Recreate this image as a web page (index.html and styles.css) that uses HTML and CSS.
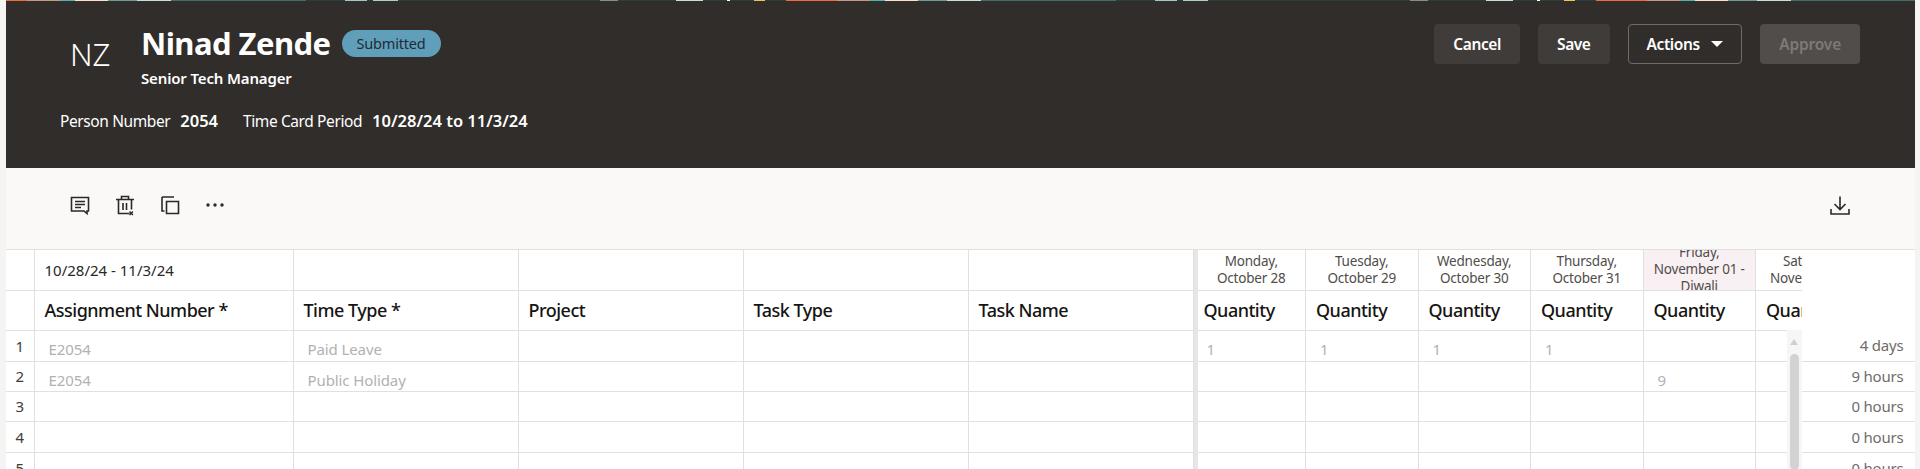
FILE: index.html

```html
<!DOCTYPE html>
<html lang="en">
<head>
  <meta charset="UTF-8">
  <title>Time Card</title>
  <link rel="stylesheet" href="styles.css">
</head>
<body>
  <div class="page">
    <header class="hero">
      <div class="hero-top">
        <div class="avatar">NZ</div>
        <div class="who">
          <div class="name-row">
            <h1>Ninad Zende</h1>
            <span class="badge">Submitted</span>
          </div>
          <div class="job">Senior Tech Manager</div>
        </div>
        <div class="actions">
          <button class="btn">Cancel</button>
          <button class="btn">Save</button>
          <button class="btn btn-outline">Actions <span class="caret"></span></button>
          <button class="btn btn-off">Approve</button>
        </div>
      </div>
      <div class="meta">
        <span class="meta-label">Person Number</span>
        <span class="meta-value">2054</span>
        <span class="meta-label meta-second">Time Card Period</span>
        <span class="meta-value">10/28/24 to 11/3/24</span>
      </div>
    </header>

    <div class="toolbar">
      <div class="tools">
        <svg viewBox="0 0 24 24"><path d="M3.5 4.5h17v13.5h-1.5v2.5l-3-2.5h-12.5z M7 8.5h10 M7 11.5h10 M7 14.5h6"/></svg>
        <svg viewBox="0 0 24 24"><path d="M3 6.5h18 M8.5 6.5v-3h7v3 M5.5 6.5v14h11 M18.5 6.5v10 M10 10v7 M13.5 10v7"/><path class="fill" d="M17 18l1.2 1.2 1.2-1.2 1 1-1.2 1.2 1.2 1.2-1 1-1.2-1.2-1.2 1.2-1-1 1.2-1.2-1.2-1.2z"/></svg>
        <svg viewBox="0 0 24 24"><path d="M8 4h8 M4 4v14h2.5 M4 4h4 M8.5 8.5h12v12h-12z"/></svg>
        <svg viewBox="0 0 24 24"><circle class="fill" cx="5" cy="12" r="1.7"/><circle class="fill" cx="12" cy="12" r="1.7"/><circle class="fill" cx="19" cy="12" r="1.7"/></svg>
      </div>
      <svg class="download" viewBox="0 0 24 24"><path d="M12 3.5v13 M6.5 11l5.5 5.5 5.5-5.5 M3 16v5h18v-5"/></svg>
    </div>

    <div class="sheet">
      <table class="grid frozen">
        <colgroup>
          <col class="c-num"><col class="c-assign"><col class="c-type"><col class="c-task"><col class="c-task"><col class="c-task">
        </colgroup>
        <tr class="r-date">
          <td></td><td class="range">10/28/24 - 11/3/24</td><td></td><td></td><td></td><td></td>
        </tr>
        <tr class="r-head">
          <td></td><th>Assignment Number *</th><th>Time Type *</th><th>Project</th><th>Task Type</th><th>Task Name</th>
        </tr>
        <tr class="r1"><td class="num">1</td><td class="val">E2054</td><td class="val">Paid Leave</td><td></td><td></td><td></td></tr>
        <tr class="r2"><td class="num">2</td><td class="val">E2054</td><td class="val">Public Holiday</td><td></td><td></td><td></td></tr>
        <tr class="r3"><td class="num">3</td><td></td><td></td><td></td><td></td><td></td></tr>
        <tr class="r4"><td class="num">4</td><td></td><td></td><td></td><td></td><td></td></tr>
        <tr class="r5"><td class="num">5</td><td></td><td></td><td></td><td></td><td></td></tr>
      </table>

      <div class="days">
        <table class="grid day-grid">
          <colgroup>
            <col class="c-first"><col class="c-day"><col class="c-day"><col class="c-day"><col class="c-day"><col class="c-day">
          </colgroup>
          <tr class="r-date">
            <td><div class="day">Monday,<br>October 28</div></td>
            <td><div class="day">Tuesday,<br>October 29</div></td>
            <td><div class="day">Wednesday,<br>October 30</div></td>
            <td><div class="day">Thursday,<br>October 31</div></td>
            <td class="holiday"><div class="day">Friday,<br>November 01 -<br>Diwali</div></td>
            <td><div class="day">Saturday,<br>November 02</div></td>
          </tr>
          <tr class="r-head"><th>Quantity</th><th>Quantity</th><th>Quantity</th><th>Quantity</th><th>Quantity</th><th>Quantity</th></tr>
          <tr class="r1"><td class="val">1</td><td class="val">1</td><td class="val">1</td><td class="val">1</td><td></td><td></td></tr>
          <tr class="r2"><td></td><td></td><td></td><td></td><td class="val">9</td><td></td></tr>
          <tr class="r3"><td></td><td></td><td></td><td></td><td></td><td></td></tr>
          <tr class="r4"><td></td><td></td><td></td><td></td><td></td><td></td></tr>
          <tr class="r5"><td></td><td></td><td></td><td></td><td></td><td></td></tr>
        </table>
        <div class="scrollbar">
          <span class="scroll-up"></span>
          <span class="scroll-thumb"></span>
        </div>
      </div>

      <table class="grid totals">
        <tr class="r-date blank"><td></td></tr>
        <tr class="r-head blank"><td></td></tr>
        <tr class="r1"><td class="sum">4 days</td></tr>
        <tr class="r2"><td class="sum">9 hours</td></tr>
        <tr class="r3"><td class="sum">0 hours</td></tr>
        <tr class="r4"><td class="sum">0 hours</td></tr>
        <tr class="r5"><td class="sum">0 hours</td></tr>
      </table>
    </div>
  </div>
</body>
</html>
```

FILE: styles.css

```css
* {
  box-sizing: border-box;
}

html, body {
  height: 100%;
  margin: 0;
  overflow: hidden;
}

body {
  background: #f5f4f2;
  font-family: "Noto Sans", Arial, sans-serif;
  color: #161513;
}

.page {
  margin: 0 5px 0 6px;
  height: 469px;
  overflow: hidden;
  background: #fff;
}

/* dark banner */
.hero {
  height: 168px;
  background-color: #312d2a;
  color: #fff;
  padding: 24px 55px 0 54px;
  position: relative;
}

.hero::before {
  content: "";
  position: absolute;
  left: 0;
  right: 0;
  top: 0;
  height: 1px;
  background-image: linear-gradient(90deg,
    #f26b3a 0 51px, #c49a80 51px 84px, #4fb3ae 84px 99px, #fde0cc 99px 132px,
    #6d9b98 132px 161px, #c5e0dc 161px 195px, #3f6f6b 195px 330px, #21413f 330px 369px,
    #9fc9c4 369px 391px, #21413f 391px 397px, #a9d0cb 397px 422px, #27403e 422px 624px,
    #87907a 624px 642px, #27403e 642px 700px, #c5e0dc 700px 727px, #21413f 727px 751px,
    #fff 751px 754px, #27403e 754px 778px, #f0c24f 778px 789px, #27403e 789px 810px);
  background-size: 810px 1px;
  background-position: -30px 0;
}

.hero-top {
  display: flex;
  align-items: flex-start;
}

.avatar {
  width: 74px;
  margin-top: 12px;
  padding-left: 10px;
  text-align: left;
  font-size: 31px;
  line-height: 36px;
  font-weight: 300;
}

.who {
  margin-left: 7px;
}

.name-row {
  display: flex;
  align-items: flex-start;
  gap: 11px;
}

h1 {
  margin: 0;
  font-size: 31px;
  line-height: 38px;
  font-weight: 700;
  letter-spacing: -0.55px;
}

.badge {
  margin-top: 6px;
  width: 99px;
  height: 27px;
  border-radius: 14px;
  background: #5f9fba;
  color: #1f2b33;
  font-size: 14.5px;
  line-height: 27px;
  text-align: center;
  letter-spacing: -0.2px;
}

.job {
  margin-top: 6px;
  font-size: 15px;
  line-height: 20px;
  font-weight: 600;
  letter-spacing: -0.15px;
}

.actions {
  margin-left: auto;
  display: flex;
  gap: 18px;
}

.btn {
  height: 40px;
  padding: 0 18px;
  border: 1px solid transparent;
  border-radius: 4px;
  background: #403c39;
  color: #fff;
  font-family: inherit;
  font-size: 15.5px;
  font-weight: 600;
  letter-spacing: -0.4px;
}

.btn-outline {
  background: transparent;
  border-color: #6f6b68;
}

.btn-off {
  background: #514d4a;
  color: #7d7a77;
  letter-spacing: -0.2px;
}

.caret {
  display: inline-block;
  margin-left: 8px;
  vertical-align: 3px;
  border-left: 6px solid transparent;
  border-right: 6px solid transparent;
  border-top: 6px solid #fff;
}

.meta {
  display: flex;
  align-items: center;
  margin-top: 23px;
  font-size: 15.5px;
  line-height: 20px;
  letter-spacing: -0.4px;
}

.meta-value {
  margin-left: 10px;
  font-weight: 600;
  font-size: 16.5px;
  letter-spacing: 0;
}

.meta-second {
  margin-left: 25px;
}

/* toolbar */
.toolbar {
  height: 81px;
  background: #faf9f7;
  display: flex;
  align-items: center;
  justify-content: space-between;
  padding: 0 63px 8px 62px;
}

.tools {
  display: flex;
  gap: 21px;
}

.toolbar svg {
  width: 24px;
  height: 24px;
  fill: none;
  stroke: #2b2826;
  stroke-width: 1.6;
}

.toolbar svg .fill {
  fill: #2b2826;
  stroke: none;
}

/* spreadsheet */
.sheet {
  display: flex;
  border-top: 1px solid #e0e0e0;
}

.grid {
  border-collapse: collapse;
  table-layout: fixed;
}

.grid td, .grid th {
  padding: 0;
  border-right: 1px solid #e0e0e0;
  border-bottom: 1px solid #e0e0e0;
  overflow: hidden;
  white-space: nowrap;
}

.frozen {
  width: 1187px;
  flex: none;
}

.c-num { width: 28px; }
.c-assign { width: 259px; }
.c-type { width: 225px; }
.c-task { width: 225px; }
.c-first { width: 108px; }
.c-day { width: 112.5px; }

.r-date { height: 40px; }
.r-head { height: 40px; }
.r1 { height: 31px; }
.r2 { height: 30px; }
.r3 { height: 30px; }
.r4 { height: 31px; }
.r5 { height: 31px; }

.range {
  padding-left: 10px !important;
  font-size: 15px;
  color: #2b2826;
}

.grid th {
  padding-left: 10px;
  text-align: left;
  font-size: 18px;
  font-weight: 500;
  letter-spacing: -0.5px;
}

.num {
  text-align: center;
  font-size: 15px;
  color: #403c39;
}

.val {
  padding: 7px 0 0 14px !important;
  font-size: 15px;
  letter-spacing: -0.1px;
  color: #b3b1af;
}

.days {
  position: relative;
  flex: none;
  width: 608px;
  height: 220px;
  overflow: hidden;
  border-left: 4px solid #e6e6e6;
}

.day-grid {
  width: 670.5px;
}

.day-grid th {
  padding-left: 10px;
}

.day-grid th:first-child {
  padding-left: 6px;
}

.day-grid .val:first-child {
  padding-left: 9px !important;
}

.day {
  height: 39px;
  display: flex;
  align-items: center;
  justify-content: center;
  text-align: center;
  font-size: 13.5px;
  line-height: 17px;
  letter-spacing: -0.2px;
  color: #504c49;
}

.holiday {
  background: #f9f0f3;
}

.scrollbar {
  position: absolute;
  right: 0;
  top: 80px;
  bottom: 0;
  width: 15px;
  background: #f6f6f6;
}

.scroll-up {
  position: absolute;
  left: 3px;
  top: 9px;
  border-left: 4px solid transparent;
  border-right: 4px solid transparent;
  border-bottom: 6px solid #cfcfcf;
}

.scroll-thumb {
  position: absolute;
  left: 3px;
  top: 24px;
  bottom: 0;
  width: 9px;
  border-radius: 5px;
  background: #d2d2d2;
}

.totals {
  width: 115px;
  flex: none;
}

.totals td {
  border-right: none;
}

.totals .blank td {
  border-bottom: none;
}

.sum {
  text-align: right;
  padding-right: 13px !important;
  font-size: 15px;
  letter-spacing: -0.2px;
  color: #6f6c6a;
}
```
